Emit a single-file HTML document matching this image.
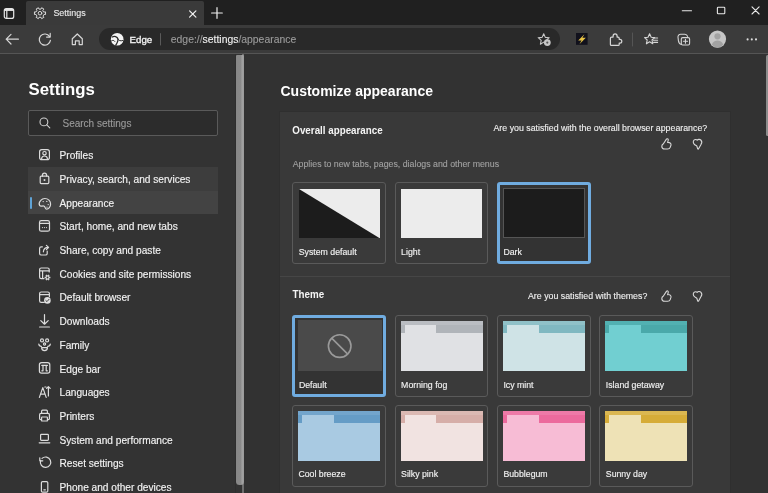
<!DOCTYPE html>
<html><head><meta charset="utf-8">
<style>
*{margin:0;padding:0;box-sizing:border-box}
html,body{width:768px;height:493px;overflow:hidden;background:#333;font-family:"Liberation Sans",sans-serif;color:#fff}
.a{position:absolute}
#strip{left:0;top:0;width:768px;height:25px;background:#202020}
#tab{left:25.5px;top:1px;width:178.5px;height:24px;background:#3a3a3a;border-radius:2px 2px 0 0}
#toolbar{left:0;top:25px;width:768px;height:28px;background:#3b3b3b}
#tline{left:0;top:53px;width:768px;height:1px;background:#555}
#addr{left:99px;top:28px;width:461px;height:21.5px;background:#292929;border-radius:11px}
.t{position:absolute;white-space:nowrap;line-height:1;-webkit-text-stroke:0.12px currentColor}
#side{left:0;top:54px;width:236px;height:439px;background:#333}
#main{left:244px;top:54px;width:524px;height:439px;background:#323232}
.row{position:absolute;left:28px;width:190px;height:23.7px}
.it{position:absolute;left:59.5px;font-size:10.15px;color:#f2f2f2;-webkit-text-stroke:0.15px #f2f2f2;white-space:nowrap;line-height:1}
.ic{position:absolute;left:39px;width:11px;height:11px}
.card{position:absolute;left:280px;top:112px;width:450px;height:381px;background:#393939;border-radius:0;box-shadow:0 0 0 1px #2f2f2f}
.oc{position:absolute;width:93.5px;height:81.5px;border:1px solid #5a5a5a;border-radius:3px;background:#3a3a3a}
.oc.sel{border:3px solid #70ace0;background:#333}
.lbl{position:absolute;font-size:8.75px;color:#f0f0f0;-webkit-text-stroke:0.15px #f0f0f0;white-space:nowrap;line-height:1}
.pv{position:absolute}
</style></head><body style="will-change:transform">
<!-- tab strip -->
<div class="a" id="strip"></div>
<div class="a" id="tab"></div>
<div class="a" id="toolbar"></div>
<div class="a" id="tline"></div>
<div class="a" id="addr"></div>
<div class="a" id="side"></div>
<div class="a" id="main"></div>

<div class="t" style="left:53.4px;top:8.7px;font-size:8.95px;color:#e8e8e8">Settings</div>
<div class="t" style="left:129.6px;top:35px;font-size:9.7px;color:#f0f0f0;-webkit-text-stroke:0.35px #f0f0f0">Edge</div>
<div class="t" style="left:170.8px;top:34.5px;font-size:10.4px;color:#9a9a9a">edge://<span style="color:#f0f0f0">settings</span>/appearance</div>

<div class="t" style="left:28.6px;top:82px;font-size:16.8px;font-weight:bold;color:#fff;-webkit-text-stroke:0">Settings</div>
<div class="a" style="left:28px;top:110px;width:190px;height:25.5px;border:1px solid #5a5a5a;background:#2c2c2c;border-radius:2px"></div>
<div class="t" style="left:62.5px;top:119.4px;font-size:10px;color:#9a9a9a">Search settings</div>

<div class="row" style="top:166.85px;background:#3d3d3d"></div>
<div class="row" style="top:190.55px;background:#434343"></div>
<div class="a" style="left:29.5px;top:197px;width:2px;height:12px;background:#5fa3d6;border-radius:1px"></div>

<div class="it" style="top:151.2px">Profiles</div>
<div class="it" style="top:174.9px">Privacy, search, and services</div>
<div class="it" style="top:198.6px">Appearance</div>
<div class="it" style="top:222.3px">Start, home, and new tabs</div>
<div class="it" style="top:246.0px">Share, copy and paste</div>
<div class="it" style="top:269.7px">Cookies and site permissions</div>
<div class="it" style="top:293.4px">Default browser</div>
<div class="it" style="top:317.1px">Downloads</div>
<div class="it" style="top:340.8px">Family</div>
<div class="it" style="top:364.5px">Edge bar</div>
<div class="it" style="top:388.2px">Languages</div>
<div class="it" style="top:411.9px">Printers</div>
<div class="it" style="top:435.6px">System and performance</div>
<div class="it" style="top:459.3px">Reset settings</div>
<div class="it" style="top:483.0px">Phone and other devices</div>

<!-- sidebar scrollbar -->
<div class="a" style="left:242.3px;top:54px;width:1.4px;height:439px;background:#6e6e6e"></div>
<div class="a" style="left:235.3px;top:54px;width:1px;height:439px;background:#2e2e2e"></div>
<div class="a" style="left:236.2px;top:54.5px;width:7.4px;height:430px;background:linear-gradient(90deg,#878787 0,#8a8a8a 62%,#a2a2a2 75%,#9a9a9a 100%);border-radius:1px 1px 3.5px 3.5px"></div>

<!-- main -->
<div class="t" style="left:280.5px;top:84px;font-size:14px;font-weight:bold;color:#fff;-webkit-text-stroke:0">Customize appearance</div>
<div class="card"></div>
<div class="t" style="left:292.3px;top:125.7px;font-size:9.8px;font-weight:bold;color:#f5f5f5;-webkit-text-stroke:0;transform:scaleY(1.17);transform-origin:0 0.85em">Overall appearance</div>
<div class="t" style="left:493.5px;top:123.5px;font-size:8.8px;color:#f0f0f0">Are you satisfied with the overall browser appearance?</div>
<div class="t" style="left:292.7px;top:159.5px;font-size:8.8px;color:#a0a0a0">Applies to new tabs, pages, dialogs and other menus</div>

<div class="oc" style="left:292px;top:182px"></div>
<div class="oc" style="left:394.5px;top:182px"></div>
<div class="oc sel" style="left:497px;top:182px"></div>
<div class="lbl" style="left:298.7px;top:248.0px">System default</div>
<div class="lbl" style="left:401.1px;top:248.0px">Light</div>
<div class="lbl" style="left:503.4px;top:248.0px">Dark</div>

<div class="a" style="left:280px;top:275.5px;width:450px;height:1px;background:#464646"></div>
<div class="t" style="left:292.5px;top:290.3px;font-size:9.8px;font-weight:bold;color:#f5f5f5;-webkit-text-stroke:0;transform:scaleY(1.17);transform-origin:0 0.85em">Theme</div>
<div class="t" style="left:528px;top:291.6px;font-size:8.8px;color:#f0f0f0">Are you satisfied with themes?</div>

<div class="oc sel" style="left:292px;top:315px"></div>
<div class="oc" style="left:394.5px;top:315px"></div>
<div class="oc" style="left:497px;top:315px"></div>
<div class="oc" style="left:599.1px;top:315px"></div>
<div class="oc" style="left:292px;top:405px"></div>
<div class="oc" style="left:394.5px;top:405px"></div>
<div class="oc" style="left:497px;top:405px"></div>
<div class="oc" style="left:599.1px;top:405px"></div>
<div class="lbl" style="left:298.9px;top:380.5px">Default</div>
<div class="lbl" style="left:401.1px;top:380.5px">Morning fog</div>
<div class="lbl" style="left:503.4px;top:380.5px">Icy mint</div>
<div class="lbl" style="left:605.8px;top:380.5px">Island getaway</div>
<div class="lbl" style="left:298.4px;top:470.0px">Cool breeze</div>
<div class="lbl" style="left:401.1px;top:470.0px">Silky pink</div>
<div class="lbl" style="left:503.4px;top:470.0px">Bubblegum</div>
<div class="lbl" style="left:605.8px;top:470.0px">Sunny day</div>

<!-- previews -->
<div class="pv" style="left:298.8px;top:188.6px;width:81px;height:49.4px;overflow:hidden"><svg width="81" height="49.4" style="position:absolute;left:0;top:0"><rect width="81" height="49.4" fill="#ececec"/><polygon points="0,0 81,49.4 0,49.4" fill="#1c1c1c"/></svg></div>
<div class="pv" style="left:401.2px;top:188.6px;width:80.6px;height:49.4px;background:#ececec"></div>
<div class="pv" style="left:503.3px;top:188px;width:81.5px;height:50.2px;border:1px solid #555;background:#1c1c1c"></div>
<div class="pv" style="left:297.6px;top:320px;width:84px;height:51.3px;background:#4a4a4a"><svg width="86" height="52" style="position:absolute;left:-1.1px;top:-0.4px"><circle cx="42.7" cy="26.1" r="11.3" fill="none" stroke="#9a9a9a" stroke-width="1.6"/><line x1="34.7" y1="18.1" x2="50.7" y2="34.1" stroke="#9a9a9a" stroke-width="1.6"/></svg></div>
<div class="pv" style="left:400.5px;top:320.8px;width:82px;height:50.6px;background:#e0e1e4"><div class="pv" style="left:0;top:0;width:82px;height:11.8px;background:#b0b4b9"></div><div class="pv" style="left:0;top:0;width:82px;height:4.7px;background:#babdc2"></div><div class="pv" style="left:4px;top:4.7px;width:31.5px;height:7.1px;background:#e0e1e4"></div></div>
<div class="pv" style="left:503px;top:320.8px;width:82px;height:50.6px;background:#cfe3e6"><div class="pv" style="left:0;top:0;width:82px;height:11.8px;background:#80b8c1"></div><div class="pv" style="left:0;top:0;width:82px;height:4.7px;background:#90c1c8"></div><div class="pv" style="left:4px;top:4.7px;width:31.5px;height:7.1px;background:#cfe3e6"></div></div>
<div class="pv" style="left:605.1px;top:320.8px;width:82px;height:50.6px;background:#71cfd1"><div class="pv" style="left:0;top:0;width:82px;height:11.8px;background:#4aa9aa"></div><div class="pv" style="left:0;top:0;width:82px;height:4.7px;background:#52b1b2"></div><div class="pv" style="left:4px;top:4.7px;width:31.5px;height:7.1px;background:#71cfd1"></div></div>
<div class="pv" style="left:298px;top:410.8px;width:82px;height:50.6px;background:#a9cae2"><div class="pv" style="left:0;top:0;width:82px;height:11.8px;background:#659cc6"></div><div class="pv" style="left:0;top:0;width:82px;height:4.7px;background:#73a5cc"></div><div class="pv" style="left:4px;top:4.7px;width:31.5px;height:7.1px;background:#a9cae2"></div></div>
<div class="pv" style="left:400.5px;top:410.8px;width:82px;height:50.6px;background:#f1e3e1"><div class="pv" style="left:0;top:0;width:82px;height:11.8px;background:#d6aea8"></div><div class="pv" style="left:0;top:0;width:82px;height:4.7px;background:#dbb9b3"></div><div class="pv" style="left:4px;top:4.7px;width:31.5px;height:7.1px;background:#f1e3e1"></div></div>
<div class="pv" style="left:503px;top:410.8px;width:82px;height:50.6px;background:#f7bcd5"><div class="pv" style="left:0;top:0;width:82px;height:11.8px;background:#ec6a9d"></div><div class="pv" style="left:0;top:0;width:82px;height:4.7px;background:#ee7aa8"></div><div class="pv" style="left:4px;top:4.7px;width:31.5px;height:7.1px;background:#f7bcd5"></div></div>
<div class="pv" style="left:605.1px;top:410.8px;width:82px;height:50.6px;background:#eee2b6"><div class="pv" style="left:0;top:0;width:82px;height:11.8px;background:#d6ac38"></div><div class="pv" style="left:0;top:0;width:82px;height:4.7px;background:#dbb751"></div><div class="pv" style="left:4px;top:4.7px;width:31.5px;height:7.1px;background:#eee2b6"></div></div>
<!-- right scrollbar -->
<div class="a" style="left:765.5px;top:55px;width:3px;height:81px;background:#8c8c8c;border-radius:1.5px"></div>
<svg class="a" style="left:0;top:0" width="768" height="493" viewBox="0 0 768 493" fill="none" stroke-linecap="round" stroke-linejoin="round">
<!-- tab strip -->
<g stroke="#e6e6e6" stroke-width="1.2">
 <rect x="4.3" y="8.6" width="9.4" height="9.8" rx="2"/>
 <path d="M4.8 10.2H13.2M6.8 10.6V18" /><rect x="4.6" y="8.9" width="8.8" height="1.8" fill="#e6e6e6" stroke="none"/>
</g>
<path d="M44.03,12.03 L45.54,11.87 L45.54,14.53 L44.03,14.37 L43.03,16.11 L43.92,17.33 L41.62,18.67 L41.00,17.28 L39.00,17.28 L38.38,18.67 L36.08,17.33 L36.97,16.11 L35.97,14.37 L34.46,14.53 L34.46,11.87 L35.97,12.03 L36.97,10.29 L36.08,9.07 L38.38,7.73 L39.00,9.12 L41.00,9.12 L41.62,7.73 L43.92,9.07 L43.03,10.29Z" stroke="#d8d8d8" stroke-width="1"/>
<circle cx="40" cy="13.2" r="1.8" stroke="#d8d8d8" stroke-width="1"/>
<g stroke="#f0f0f0" stroke-width="1.2">
 <path d="M189.6 10.9L195.9 17.2M195.9 10.9L189.6 17.2"/>
 <path d="M211.6 13H222.3M217 7.7V18.3"/>
</g>
<g stroke="#e8e8e8" stroke-width="1.1">
 <path d="M682.3 10.8H691.5"/>
 <rect x="717.4" y="7.3" width="7.4" height="6.4" rx="0.8"/>
 <path d="M752 6.9L759.1 14M759.1 6.9L752 14"/>
</g>
<!-- toolbar -->
<g stroke="#d6d6d6" stroke-width="1.2">
 <path d="M6.2 39.2H18.4M11 34.4L6.2 39.2L11 44"/>
 <path d="M49.6 36.6A5.6 5.6 0 1 0 50.4 40.4"/>
 <path d="M50.2 33.4V37.1H46.6"/>
 <path d="M72.3 38.8L77.3 34L82.3 38.8V44.6H79.2V40.8H75.4V44.6H72.3Z"/>
</g>
<circle cx="117.2" cy="39.2" r="6.3" fill="#f4f4f4"/>
<path d="M112.2 37C114.4 35.9 117.2 36.6 117.9 38.8C118.5 40.8 117.4 42.6 115.8 45.2" stroke="#2a2a2a" stroke-width="1.3" fill="none"/><path d="M117.9 39.2C118.8 40.6 120.4 41.2 122.6 40.6" stroke="#2a2a2a" stroke-width="1" fill="none"/><path d="M111.6 40.8C112.6 40 114 40.2 114.8 41.4" stroke="#2a2a2a" stroke-width="1" fill="none"/>
<path d="M160.5 33.6V45" stroke="#5a5a5a" stroke-width="1"/>
<g stroke="#c8c8c8" stroke-width="1.1">
 <path d="M543.7 33.8L545.3 37.4L549.2 37.7L546.2 40.3L547 44.2L543.7 42.1L540.4 44.2L541.2 40.3L538.2 37.7L542.1 37.4Z"/>
</g>
<circle cx="547.3" cy="42.6" r="3.4" fill="#c8c8c8"/>
<circle cx="547.3" cy="42.6" r="1.1" fill="#555"/>
<rect x="576" y="33" width="11.6" height="11.8" fill="#11111c"/>
<path d="M584.4 34.2L578.2 40.4H581.6L579.4 44.2L585.8 37.8H582.4Z" fill="#e8c444"/>
<g stroke="#d6d6d6" stroke-width="1.2">
 <path d="M610.4 44.4V38.4C610.4 37.6 610.9 37.1 611.6 37.1H613.1V36C613.1 34.7 614 33.8 615.1 33.8C616.2 33.8 617.1 34.7 617.1 36V37.1H618C618.7 37.1 619.2 37.6 619.2 38.4V39.3H619.9C621 39.3 621.8 40.1 621.8 41.2C621.8 42.3 621 43.1 619.9 43.1H619.2V44.4C619.2 45 618.8 45.4 618.2 45.4H611.4C610.8 45.4 610.4 45 610.4 44.4Z"/>
</g>
<path d="M632.5 33V46" stroke="#555" stroke-width="1"/>
<g stroke="#d6d6d6" stroke-width="1.1">
 <path d="M649.6 33.8L651.2 37.3L654.6 37.6L652 40L652.8 43.8L649.6 41.8L646.4 43.8L647.2 40L644.6 37.6L648 37.3Z"/>
 <path d="M653.4 40.2H657.6M653.6 42.4H657.6M654.4 38H657.6"/>
 <path d="M681.4 44.5C679.6 44 678.6 42.6 678.4 40.6L678 37.2C677.8 35.4 679 34.2 680.6 34.2L684.8 34.2C686.2 34.2 687.2 35 687.6 36.4"/>
 <rect x="681.3" y="37.6" width="8.3" height="7.4" rx="1.4"/>
 <path d="M685.45 39.3V43.3M683.4 41.3H687.5"/>
</g>
<circle cx="717.5" cy="39.1" r="8.6" fill="#c6c6c6"/>
<circle cx="717.5" cy="36.3" r="3.1" fill="#a2a2a2"/>
<path d="M711.8 44.6C712.8 41.8 715 40.6 717.5 40.6C720 40.6 722.2 41.8 723.2 44.6C721.8 46.6 719.8 47.6 717.5 47.6C715.2 47.6 713.2 46.6 711.8 44.6Z" fill="#a2a2a2"/>
<g fill="#dcdcdc"><circle cx="747.6" cy="39.4" r="1.05"/><circle cx="751.8" cy="39.4" r="1.05"/><circle cx="756" cy="39.4" r="1.05"/></g>
<!-- search -->
<g stroke="#d0d0d0" stroke-width="1.1">
 <circle cx="43.9" cy="121.9" r="3.9"/>
 <path d="M46.8 124.8L49.8 127.8"/>
</g>
<!-- sidebar icons -->
<g stroke="#dcdcdc" stroke-width="1.2">
 <!-- profiles -->
 <rect x="39.6" y="149.6" width="9.8" height="10" rx="2.2"/>
 <circle cx="44.5" cy="153.2" r="1.7"/>
 <path d="M41.6 158.6C41.8 156.6 43 156 44.5 156C46 156 47.2 156.6 47.4 158.6"/>
 <!-- lock -->
 <rect x="40.2" y="176.2" width="8.6" height="7.4" rx="1"/>
 <path d="M42.4 176.2V175.2C42.4 173.9 43.3 173.1 44.5 173.1C45.7 173.1 46.6 173.9 46.6 175.2V176.2"/>
 <circle cx="44.5" cy="179.9" r="0.4" fill="#d8d8d8"/>
 <!-- palette -->
 <g transform="translate(0,1.2)"><path d="M44.8 197.3C48.2 197.3 50.6 199.8 50.6 202.8C50.6 205.8 48.6 208 46.6 208C45 208 45.6 206 44.2 205C42.8 204 40.8 206 39.6 204.2C38.8 202.8 39.4 200.6 40.8 199.2C41.8 198 43.2 197.3 44.8 197.3Z"/><g fill="#dcdcdc" stroke="none"><circle cx="43.2" cy="200.4" r="0.7"/><circle cx="46.8" cy="200.2" r="0.7"/><circle cx="48.2" cy="203.4" r="0.7"/><circle cx="47" cy="206" r="0.6"/></g></g>
 <!-- start/home -->
 <rect x="39.5" y="220.6" width="10" height="10.6" rx="1.8"/>
 <path d="M39.8 223.4H49.2"/>
 <g fill="#d8d8d8" stroke="none"><circle cx="42.5" cy="227.6" r="0.6"/><circle cx="44.5" cy="227.6" r="0.6"/><circle cx="46.5" cy="227.6" r="0.6"/></g>
 <!-- share -->
 <path d="M47.2 251.2V253.4C47.2 254.4 46.4 255 45.6 255H41.2C40.2 255 39.6 254.4 39.6 253.4V248.4C39.6 247.4 40.2 246.8 41.2 246.8H42.4"/>
 <path d="M43.4 251.8C43.6 249 45.4 247.4 48.2 247.4M46.4 245.4L48.6 247.4L46.4 249.6"/>
 <!-- cookies -->
 <path d="M44 278.6H41.2C40.2 278.6 39.6 278 39.6 277V269.6C39.6 268.6 40.2 268 41.2 268H47.6C48.6 268 49.2 268.6 49.2 269.6V272"/>
 <path d="M39.8 270.8H49M42.6 271V278.4"/>
 <!-- default browser -->
 <path d="M44.2 302.4H41.2C40.2 302.4 39.6 301.8 39.6 300.8V293.6C39.6 292.6 40.2 292 41.2 292H47.8C48.8 292 49.4 292.6 49.4 293.6V296.4"/>
 <path d="M39.8 294.6H49.2"/>
 <!-- downloads -->
 <path d="M44.5 314.6V324.2M40.8 320.6L44.5 324.2L48.2 320.6M39.6 327H49.4"/>
 <!-- family -->
 <circle cx="42" cy="340.4" r="1.5"/>
 <circle cx="47.1" cy="340.4" r="1.5"/>
 <circle cx="44.55" cy="344" r="1.1"/>
 <path d="M38.8 344.2C39 345.6 40 346.4 41.4 346.4M50.3 344.2C50.1 345.6 49.1 346.4 47.7 346.4"/>
 <path d="M41.6 347.6H47.5C47.5 349.4 46.2 350.6 44.55 350.6C42.9 350.6 41.6 349.4 41.6 347.6Z"/>
 <!-- edge bar -->
 <rect x="39.4" y="362.6" width="10.4" height="10.6" rx="2.2"/>
 <path d="M41.8 365.4H47.4M43 365.4V370.8M46.2 365.4V370.8M41.8 370.8H43M46.2 370.8H47.4"/>
 <!-- languages -->
 <path d="M39.4 397.4L42.8 387.6L46.2 397.4M40.6 394.2H45"/>
 <path d="M48.4 396V386.6M46.6 388.4L48.4 386.6L50.2 388.4M44.8 387H46"/>
 <!-- printers -->
 <path d="M41.6 413.4V411.2C41.6 410.6 42 410.2 42.6 410.2H46.4C47 410.2 47.4 410.6 47.4 411.2V413.4"/>
 <path d="M41.4 419.6H40.6C40 419.6 39.6 419.2 39.6 418.6V414.8C39.6 414 40.2 413.4 41 413.4H48C48.8 413.4 49.4 414 49.4 414.8V418.6C49.4 419.2 49 419.6 48.4 419.6H47.6"/>
 <rect x="41.6" y="417" width="5.8" height="4" rx="0.6"/>
 <!-- system -->
 <rect x="40.6" y="434.4" width="7.8" height="6" rx="0.8"/>
 <path d="M39.2 442.8H49.8"/>
 <!-- reset -->
 <path d="M40.6 460.6A5.2 5.2 0 1 0 42 458.4"/>
 <path d="M39.8 457.8V460.8H42.8" />
 <!-- phone -->
 <rect x="41.4" y="481.6" width="6.4" height="10.6" rx="1.2"/>
 <path d="M43.8 489.8H45.4"/>
</g>
<!-- cookies gear & default check (filled) -->
<path d="M46.61,272.89 L47.42,272.80 L47.42,274.20 L46.61,274.11 L46.09,275.02 L46.57,275.68 L45.35,276.38 L45.02,275.64 L43.98,275.64 L43.65,276.38 L42.43,275.68 L42.91,275.02 L42.39,274.11 L41.58,274.20 L41.58,272.80 L42.39,272.89 L42.91,271.98 L42.43,271.32 L43.65,270.62 L43.98,271.36 L45.02,271.36 L45.35,270.62 L46.57,271.32 L46.09,271.98Z" transform="translate(3,4)" fill="#d8d8d8"/>
<circle cx="47.5" cy="277.5" r="0.9" fill="#333"/>
<circle cx="47.4" cy="300.4" r="3.3" fill="#e0e0e0"/>
<path d="M45.8 300.5L47 301.6L49 299.3" stroke="#333" stroke-width="0.9"/>
<!-- thumbs -->
<g stroke="#d8d8d8" stroke-width="1.1">
 <path d="M663.4 143.8L666.6 138.9C667.6 138.3 668.6 139.2 668.2 140.4L667.6 142.4C669.6 142.2 671.4 143.2 671 145L670.2 147.4C669.8 148.6 668.8 149 667.6 149L664.8 149C663 149 661.8 147.8 661.8 146.2C661.8 145.2 662.4 144.4 663.4 143.8Z"/>
 <path d="M694.5 144.5C693.2 143.4 692.8 141.4 694 140.2C695 139.2 696.6 139.4 697.2 140.2C698 139.2 699.8 139 700.8 140C702 141.2 702 143 701 144.4L698.6 148.8C698.4 149.2 697.9 149.2 697.7 148.8L696.8 146C696.2 145.6 695.2 145.2 694.5 144.5Z"/>
</g>
<g stroke="#d8d8d8" stroke-width="1.1" transform="translate(0,152.2)">
 <path d="M663.4 143.8L666.6 138.9C667.6 138.3 668.6 139.2 668.2 140.4L667.6 142.4C669.6 142.2 671.4 143.2 671 145L670.2 147.4C669.8 148.6 668.8 149 667.6 149L664.8 149C663 149 661.8 147.8 661.8 146.2C661.8 145.2 662.4 144.4 663.4 143.8Z"/>
 <path d="M694.5 144.5C693.2 143.4 692.8 141.4 694 140.2C695 139.2 696.6 139.4 697.2 140.2C698 139.2 699.8 139 700.8 140C702 141.2 702 143 701 144.4L698.6 148.8C698.4 149.2 697.9 149.2 697.7 148.8L696.8 146C696.2 145.6 695.2 145.2 694.5 144.5Z"/>
</g>
</svg>
</body></html>
